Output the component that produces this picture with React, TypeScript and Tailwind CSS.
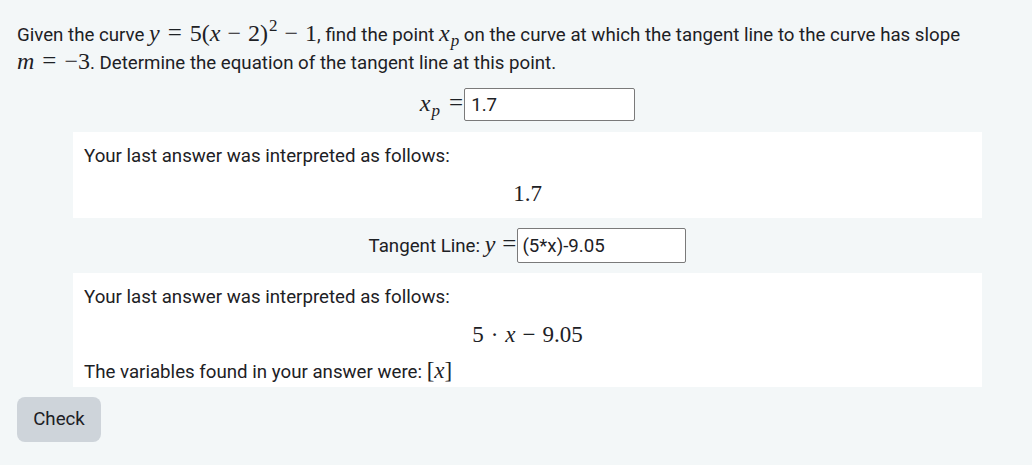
const mathFont = { fontFamily: '"Liberation Serif", "DejaVu Serif", serif' };

function Sub({ children }: { children: React.ReactNode }) {
  return <span className="relative top-[5px] text-[17px] leading-[0px] italic ml-[1px]">{children}</span>;
}

function Rel({ children = "=" }: { children?: React.ReactNode }) {
  return <span className="mx-[8px] not-italic text-[25px] leading-[0px]">{children}</span>;
}

function Op({ children }: { children: React.ReactNode }) {
  return <span className="mx-[7px] not-italic">{children}</span>;
}

function Feedback({ expr, vars }: { expr: React.ReactNode; vars?: boolean }) {
  return (
    <div className="mx-[56px] bg-white px-[11px] pt-[10px] pb-[1px]">
      <div className="leading-[28px]">Your last answer was interpreted as follows:</div>
      <div className="h-[47px] flex items-center justify-center text-[23px] leading-none" style={mathFont}>
        {expr}
      </div>
      {vars && (
        <div className="leading-[28px]">
          The variables found in your answer were:{" "}
          <span className="text-[23px] leading-[0px]" style={mathFont}>
            [<i>x</i>]
          </span>
        </div>
      )}
    </div>
  );
}

export default function App() {
  return (
    <div
      className="min-h-[465px] bg-[#f3f7f8] text-[#1d2125] text-[18.7px] pl-[17px] pt-[21px]"
      style={{ fontFamily: 'Roboto, "Liberation Sans", sans-serif' }}
    >
      <div className="w-[1021px]">
        <p className="leading-[28px] w-[985px]">
          Given the curve{" "}
          <span className="text-[24px] leading-[0px]" style={mathFont}>
            <i>y</i>
            <Rel />
            5(<i>x</i>
            <Op>−</Op>2)
            <span className="relative -top-[10px] text-[17px] leading-[0px] ml-[1px]">2</span>
            <Op>−</Op>1
          </span>
          , find the point{" "}
          <span className="text-[24px] leading-[0px]" style={mathFont}>
            <i>x</i>
            <Sub>p</Sub>
          </span>{" "}
          on the curve at which the tangent line to the curve has slope{" "}
          <span className="text-[24px] leading-[0px]" style={mathFont}>
            <i>m</i>
            <Rel />
            −3
          </span>
          . Determine the equation of the tangent line at this point.
        </p>

        <div className="mt-[11px] flex items-center justify-center">
          <span className="text-[24px] leading-none relative -top-[2px]" style={mathFont}>
            <i>x</i>
            <Sub>p</Sub>
            <span className="ml-[9px] text-[25px]">=</span>
          </span>
          <input
            readOnly
            value="1.7"
            className="ml-[1px] w-[171px] h-[33px] border border-[#7a7a7a] rounded-[2px] bg-white px-[6px] text-[18.7px] outline-none"
          />
        </div>

        <div className="mt-[11px]">
          <Feedback expr={<span>1.7</span>} />
        </div>

        <div className="mt-[10px] flex items-center justify-center">
          <span className="leading-[28px]">
            Tangent Line:{" "}
            <span className="text-[24px] leading-[0px]" style={mathFont}>
              <i>y</i>
              <span className="ml-[7px] text-[25px]">=</span>
            </span>
          </span>
          <input
            readOnly
            value="(5*x)-9.05"
            className="ml-[1px] w-[169px] h-[35px] border border-[#7a7a7a] rounded-[2px] bg-white px-[4px] text-[18.7px] outline-none"
          />
        </div>

        <div className="mt-[10px]">
          <Feedback
            expr={
              <span>
                5<Op>·</Op>
                <i>x</i>
                <Op>−</Op>9.05
              </span>
            }
            vars
          />
        </div>
      </div>

      <button className="mt-[10px] w-[84px] h-[45px] rounded-[8px] bg-[#ced4da] text-[#1d2125] text-[18.7px]">
        Check
      </button>
    </div>
  );
}
